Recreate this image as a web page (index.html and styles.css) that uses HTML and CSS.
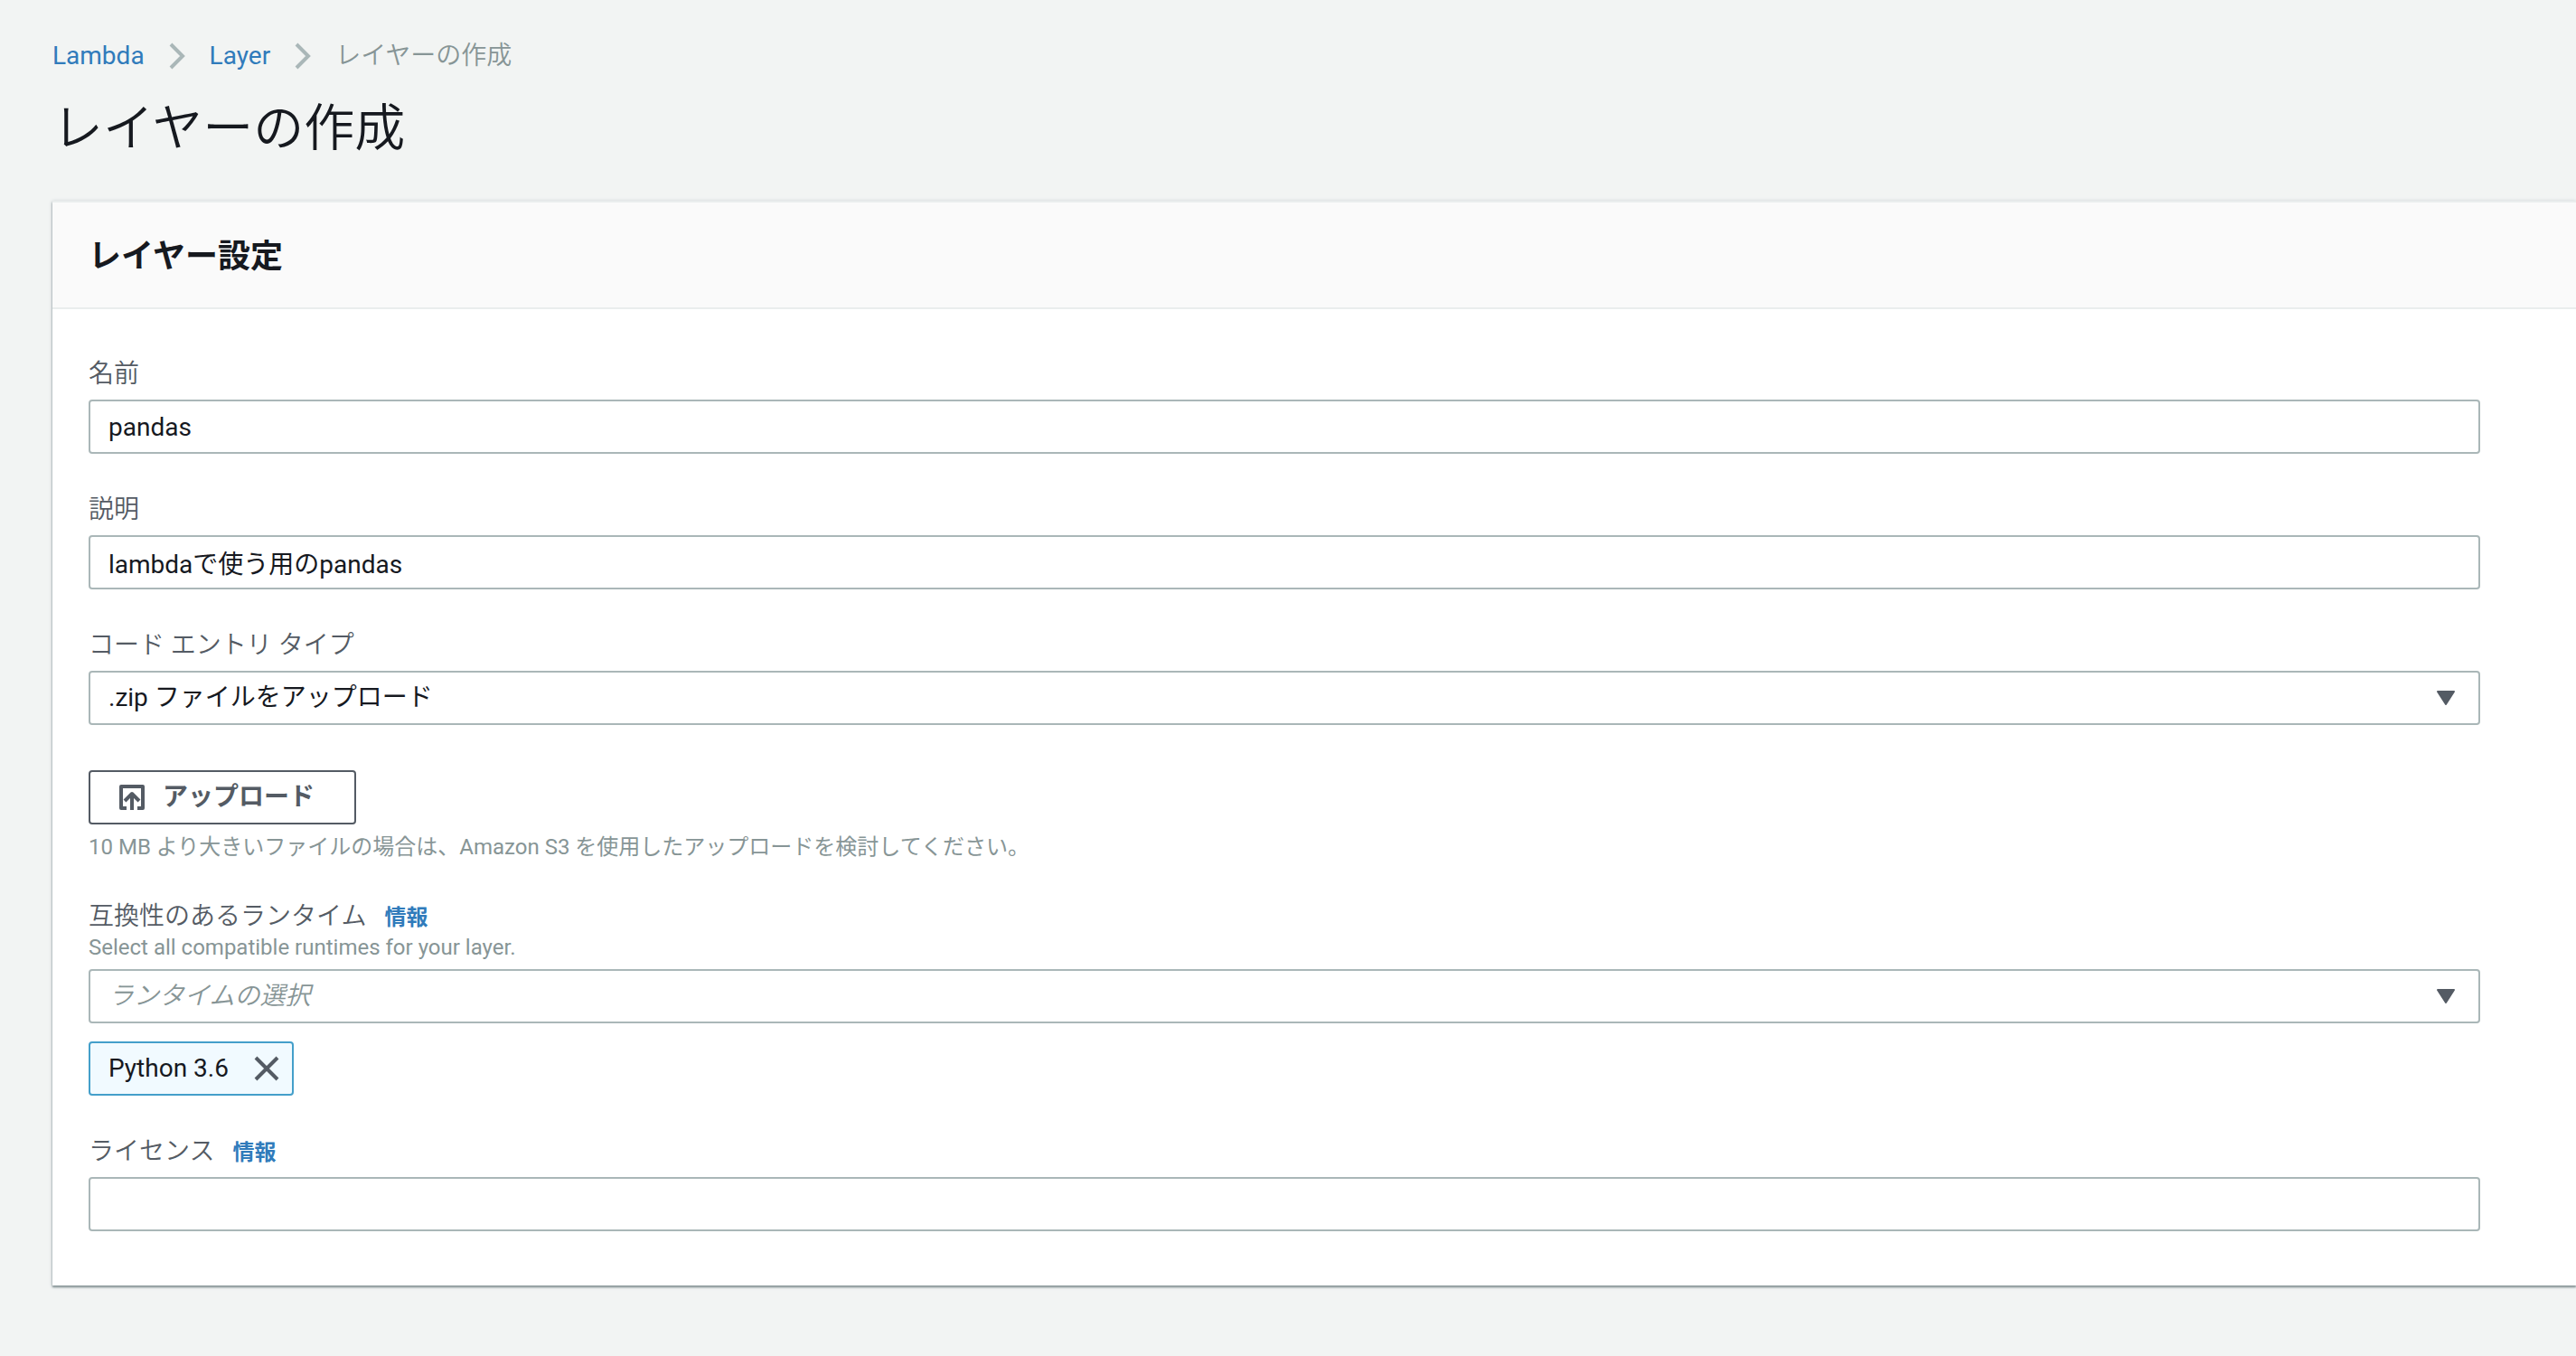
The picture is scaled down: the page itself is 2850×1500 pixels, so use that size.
FILE: index.html
```html
<!DOCTYPE html>
<html lang="ja">
<head>
<meta charset="utf-8">
<title>レイヤーの作成</title>
<link rel="stylesheet" href="styles.css">
</head>
<body>
<main class="page">
  <nav class="breadcrumb" aria-label="パンくずリスト">
    <a class="link" href="#lambda">Lambda</a>
    <svg class="breadcrumb-sep" viewBox="0 0 18 30" aria-hidden="true"><path d="M2 2 15 15 2 28"/></svg>
    <a class="link" href="#layers">Layer</a>
    <svg class="breadcrumb-sep" viewBox="0 0 18 30" aria-hidden="true"><path d="M2 2 15 15 2 28"/></svg>
    <span class="breadcrumb-current" aria-current="page">レイヤーの作成</span>
  </nav>
  <h1 class="page-title">レイヤーの作成</h1>

  <section class="card">
    <header class="card-header"><h2 class="card-title">レイヤー設定</h2></header>
    <form class="form">
      <div class="field">
        <label class="label" for="name">名前</label>
        <input class="control" id="name" type="text" value="pandas">
      </div>
      <div class="field">
        <label class="label" for="description">説明</label>
        <input class="control" id="description" type="text" value="lambdaで使う用のpandas">
      </div>
      <div class="field">
        <label class="label" for="entry-type">コード エントリ タイプ</label>
        <div class="select">
          <select class="control" id="entry-type"><option>.zip ファイルをアップロード</option></select>
          <svg class="select-arrow" viewBox="0 0 20 16" aria-hidden="true"><path d="M1 1H19L10 15Z"/></svg>
        </div>
      </div>
      <div class="upload">
        <button class="button" type="button">
          <svg class="button-icon" viewBox="0 0 28 28" aria-hidden="true"><path d="M8 26H2V2H26V26H20M14 28V10M6 18 14 10 22 18"/></svg>
          アップロード
        </button>
        <p class="hint">10 MB より大きいファイルの場合は、Amazon S3 を使用したアップロードを検討してください。</p>
      </div>
      <div class="field">
        <div class="label-group">
          <div class="label-row">
            <label class="label" for="runtime">互換性のあるランタイム</label>
            <a class="link info" href="#runtime-info">情報</a>
          </div>
          <p class="hint hint-compact">Select all compatible runtimes for your layer.</p>
        </div>
        <div class="select">
          <select class="control placeholder" id="runtime"><option>ランタイムの選択</option></select>
          <svg class="select-arrow" viewBox="0 0 20 16" aria-hidden="true"><path d="M1 1H19L10 15Z"/></svg>
        </div>
        <div class="tags">
          <span class="tag">Python 3.6
            <button class="tag-remove" type="button" aria-label="Python 3.6 を削除">
              <svg class="tag-icon" viewBox="0 0 28 28" aria-hidden="true"><path d="M2 2 26 26M26 2 2 26"/></svg>
            </button>
          </span>
        </div>
      </div>
      <div class="field">
        <div class="label-row">
          <label class="label" for="license">ライセンス</label>
          <a class="link info" href="#license-info">情報</a>
        </div>
        <input class="control" id="license" type="text">
      </div>
    </form>
  </section>
</main>
</body>
</html>
```

FILE: styles.css
```css
* { box-sizing: border-box; }

body {
  margin: 0;
  background: #f2f4f3;
  color: #16191f;
  font-family: Roboto, "Noto Sans CJK JP", sans-serif;
  font-size: 28px;
  line-height: 44px;
}

h1, h2, p { margin: 0; }

.page { padding: 40px 0 40px 58px; }

.link { color: #307bbb; text-decoration: none; }

.breadcrumb { display: flex; align-items: center; gap: 27px; }
.breadcrumb-sep {
  width: 18px;
  height: 30px;
  fill: none;
  stroke: #aab7b8;
  stroke-width: 4;
}
.breadcrumb-current { color: #879596; font-weight: 350; }

.page-title {
  padding: 18px 0 40px;
  font-size: 56px;
  font-weight: 350;
  line-height: 80px;
}

.card {
  background: #fff;
  border-top: 2px solid #eaeded;
  box-shadow: 0 2px 2px #879596, 0 1px 4px #b4bcc4;
}
.card-header {
  padding: 36px 40px 32px;
  background: #fafafa;
  border-bottom: 2px solid #eaeded;
}
.card-title { font-size: 36px; line-height: 48px; font-weight: 700; }

.form {
  display: flex;
  flex-direction: column;
  gap: 40px;
  padding: 50px 106px 60px 40px;
}

.field { display: flex; flex-direction: column; gap: 6px; }
.label { color: #545b64; font-weight: 350; }
.label-row { display: flex; align-items: baseline; gap: 20px; }
.info { font-size: 24px; font-weight: 700; line-height: 32px; }

.control {
  width: 100%;
  height: 60px;
  padding: 0 20px;
  appearance: none;
  background: #fff;
  border: 2px solid #aab7b8;
  border-radius: 4px;
  color: inherit;
  font: inherit;
}
.placeholder { color: #879596; font-style: italic; font-weight: 350; }

.select { display: grid; align-items: center; }
.select > * { grid-area: 1 / 1; }
.select-arrow {
  justify-self: end;
  width: 20px;
  height: 16px;
  margin-right: 28px;
  fill: #545b64;
  stroke: #545b64;
  stroke-width: 2;
  stroke-linejoin: round;
  pointer-events: none;
}

.upload {
  display: flex;
  flex-direction: column;
  align-items: flex-start;
  gap: 10px;
  padding-top: 10px;
}
.button {
  display: flex;
  align-items: center;
  gap: 20px;
  height: 60px;
  padding: 0 44px 0 32px;
  background: #fff;
  border: 2px solid #545b64;
  border-radius: 4px;
  color: #545b64;
  font: inherit;
  font-weight: 700;
}
.button-icon {
  width: 28px;
  height: 28px;
  fill: none;
  stroke: currentColor;
  stroke-width: 4;
  stroke-linejoin: round;
}

.hint { color: #879596; font-size: 24px; line-height: 30px; }
.hint-compact { padding-bottom: 6px; line-height: 24px; }

.tags { display: flex; padding-top: 14px; }
.tag {
  display: flex;
  align-items: center;
  gap: 28px;
  height: 60px;
  padding: 0 14px 0 20px;
  background: #f1faff;
  border: 2px solid #449fca;
  border-radius: 4px;
}
.tag-remove {
  display: flex;
  padding: 0;
  background: none;
  border: 0;
  color: #545b64;
}
.tag-icon {
  width: 28px;
  height: 28px;
  fill: none;
  stroke: currentColor;
  stroke-width: 4;
}
```
